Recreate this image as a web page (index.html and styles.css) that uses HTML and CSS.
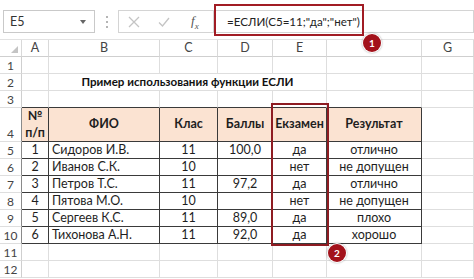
FILE: index.html
```html
<!DOCTYPE html>
<html lang="ru">
<head>
<meta charset="utf-8">
<link rel="stylesheet" href="styles.css">
</head>
<body>
<div class="screen">
  <div class="fbar">
    <div class="namebox"><span>E5</span><span class="caret"></span></div>
    <div class="dots"><i></i><i></i><i></i></div>
    <div class="btns">
      <svg class="ic" width="14" height="14" viewBox="0 0 14 14"><path d="M2 2L12 12M12 2L2 12" stroke="#c4c4c4" stroke-width="1.3" fill="none"/></svg>
      <svg class="ic" width="14" height="14" viewBox="0 0 14 14"><path d="M2 7.5L5.5 11L12 3" stroke="#c4c4c4" stroke-width="1.3" fill="none"/></svg>
      <span class="fx">f<sub>x</sub></span>
    </div>
    <div class="finput">=ЕСЛИ(С5=11;"да";"нет")</div>
    <div class="hl-formula"></div>
    <div class="badge b1">1</div>
  </div>
  <div class="sheet">
    <div class="c h corner"><span class="tri"></span></div>
    <div class="c h">A</div><div class="c h">B</div><div class="c h">C</div><div class="c h">D</div><div class="c h">E</div><div class="c h"></div><div class="c h">G</div>

    <div class="c r">1</div><div class="c"></div><div class="c"></div><div class="c"></div><div class="c"></div><div class="c"></div><div class="c"></div><div class="c"></div>

    <div class="c r">2</div><div class="c"></div><div class="c title">Пример использования функции ЕСЛИ</div><div class="c"></div><div class="c"></div>

    <div class="c r">3</div><div class="c top"></div><div class="c top"></div><div class="c top"></div><div class="c top"></div><div class="c top"></div><div class="c top"></div><div class="c"></div>

    <div class="c r tall tr">4</div>
    <div class="c t th stack"><span>№</span><span>п/п</span></div>
    <div class="c t th">ФИО</div><div class="c t th">Клас</div><div class="c t th">Баллы</div><div class="c t th">Екзамен</div><div class="c t th">Результат</div><div class="c"></div>

    <div class="c r tr">5</div><div class="c t">1</div><div class="c t l">Сидоров И.В.</div><div class="c t">11</div><div class="c t">100,0</div><div class="c t">да</div><div class="c t">отлично</div><div class="c"></div>
    <div class="c r tr">6</div><div class="c t">2</div><div class="c t l">Иванов С.К.</div><div class="c t">10</div><div class="c t"></div><div class="c t">нет</div><div class="c t">не допущен</div><div class="c"></div>
    <div class="c r tr">7</div><div class="c t">3</div><div class="c t l">Петров Т.С.</div><div class="c t">11</div><div class="c t">97,2</div><div class="c t">да</div><div class="c t">отлично</div><div class="c"></div>
    <div class="c r tr">8</div><div class="c t">4</div><div class="c t l">Пятова М.О.</div><div class="c t">10</div><div class="c t"></div><div class="c t">нет</div><div class="c t">не допущен</div><div class="c"></div>
    <div class="c r tr">9</div><div class="c t">5</div><div class="c t l">Сергеев К.С.</div><div class="c t">11</div><div class="c t">89,0</div><div class="c t">да</div><div class="c t">плохо</div><div class="c"></div>
    <div class="c r tr">10</div><div class="c t">6</div><div class="c t l">Тихонова А.Н.</div><div class="c t">11</div><div class="c t">92,0</div><div class="c t">да</div><div class="c t">хорошо</div><div class="c"></div>

    <div class="c r">11</div><div class="c"></div><div class="c"></div><div class="c"></div><div class="c"></div><div class="c"></div><div class="c"></div><div class="c"></div>
    <div class="c r">12</div><div class="c"></div><div class="c"></div><div class="c"></div><div class="c"></div><div class="c"></div><div class="c"></div><div class="c"></div>

    <div class="hl-col"></div>
    <div class="badge b2">2</div>
  </div>
</div>
</body>
</html>
```

FILE: styles.css
```css
* { box-sizing: border-box; }
html, body { margin: 0; padding: 0; background: #fff; }
body { width: 474px; height: 279px; overflow: hidden; font-family: Lato, "Open Sans", sans-serif; color: #222; }
.screen { position: relative; width: 474px; height: 279px; overflow: hidden; }

.fbar { position: relative; z-index: 2; height: 40px; display: flex; align-items: flex-start; padding-top: 10px; padding-left: 3px; border-bottom: 1px solid #e2e2e2; }
.namebox { width: 92px; height: 23px; border: 1px solid #c9c9c9; display: flex; align-items: center; justify-content: space-between; padding: 0 8px 0 6px; font-size: 12.5px; color: #333; }
.caret { width: 0; height: 0; border-left: 3px solid transparent; border-right: 3px solid transparent; border-top: 4px solid #666; }
.dots { width: 23px; height: 23px; display: flex; flex-direction: column; align-items: center; justify-content: center; gap: 3px; }
.dots i { width: 2px; height: 2px; background: #b5b5b5; display: block; }
.btns { width: 96px; height: 23px; border: 1px solid #d4d4d4; display: flex; align-items: center; padding: 0 0 0 8px; gap: 16px; }
.fx { font-family: "Liberation Serif", serif; font-style: italic; font-size: 13px; color: #555; margin-left: 4px; }
.fx sub { font-size: 9px; }
.finput { flex: 1; height: 23px; border: 1px solid #d4d4d4; border-left: none; font-size: 11.6px; padding-left: 13px; line-height: 21px; color: #222; white-space: nowrap; }
.hl-formula { position: absolute; left: 214px; top: 4px; width: 150px; height: 32px; border: 2px solid #a11c24; }

.badge { position: absolute; z-index: 5; width: 18px; height: 18px; border-radius: 50%; background: #a3121b; color: #fff; font: bold 10px/18px Lato, sans-serif; text-align: center; box-shadow: 0 0 0 1px #fff, 0 0 2px 1px rgba(0,0,0,0.35); }
.b1 { left: 363px; top: 34px; }

.sheet { position: relative; z-index: 1; display: grid; grid-template-columns: 22px 27px 111px 58px 55px 54px 95px 52px; grid-template-rows: 17px 17px 17px 17px 34px repeat(8, 17px); }
.c { border-right: 1px solid #dedede; border-bottom: 1px solid #dedede; font-size: 12.5px; display: flex; align-items: center; justify-content: center; white-space: nowrap; line-height: 1; }
.h { color: #444; font-size: 12.5px; border-bottom-color: #cfcfcf; border-right-color: #d9d9d9; }
.corner { position: relative; }
.tri { position: absolute; right: 3px; bottom: 3px; width: 0; height: 0; border-left: 7px solid transparent; border-bottom: 7px solid #c4c4c4; }
.r { color: #444; border-right-color: #cfcfcf; align-items: flex-end; padding-bottom: 1px; font-size: 12px; }
.tr { border-right-color: #8a8a8a; }
.title { grid-column: span 4; font-weight: bold; color: #111; font-size: 11.6px; }
.top { border-bottom-color: #3a3a3a; }
.t { border-right-color: #3a3a3a; border-bottom-color: #3a3a3a; color: #1e1e1e; }
.th { background: #fbe3d2; font-weight: bold; }
.stack { flex-direction: column; gap: 4px; }
.l { justify-content: flex-start; padding-left: 3px; }
.hl-col { position: absolute; left: 271px; top: 63px; width: 58px; height: 143px; border: 2px solid #8e1c22; }
.b2 { left: 328px; top: 204px; }
```
